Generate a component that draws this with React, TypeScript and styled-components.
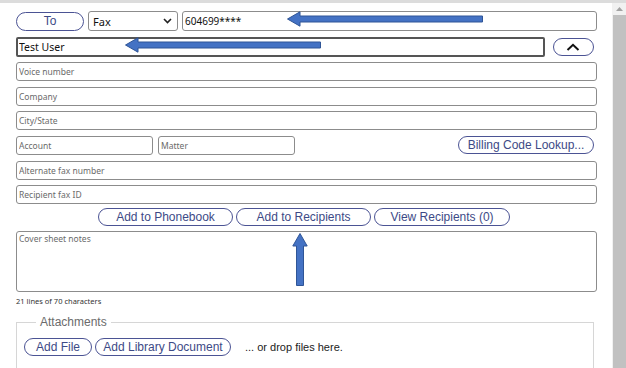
import styled, { createGlobalStyle } from "styled-components";

const GlobalStyle = createGlobalStyle`
  html, body {
    margin: 0;
    padding: 0;
    background: #ffffff;
  }
  * {
    box-sizing: border-box;
  }
`;

const Frame = styled.div`
  width: 626px;
  height: 368px;
  display: flex;
  overflow: hidden;
  position: relative;
  border-top: 3px solid #dcdcdc;
  font-family: "Liberation Sans", Arial, sans-serif;
`;

const Content = styled.div`
  flex: 1;
  padding: 8px 15px 0 16px;
  display: flex;
  flex-direction: column;
`;

const Fields = styled.div`
  display: flex;
  flex-direction: column;
  gap: 5.6px;
`;

const Row = styled.div<{ $justify?: string }>`
  display: flex;
  align-items: center;
  gap: 4px;
  flex: none;
  justify-content: ${(p) => p.$justify || "flex-start"};
`;

const ActionRow = styled(Row)`
  margin-top: 4px;
  gap: 3px;
  padding-right: 5px;
`;

const PillButton = styled.button<{ $w: number; $h?: number }>`
  width: ${(p) => p.$w}px;
  height: ${(p) => p.$h || 18}px;
  flex: none;
  border: 1px solid #4b5394;
  border-radius: 10px;
  background: #ffffff;
  color: #3d4a86;
  font-family: "Liberation Sans", Arial, sans-serif;
  font-size: 12px;
  padding: 0;
  display: flex;
  align-items: center;
  justify-content: center;
  cursor: pointer;
`;

const Field = styled.input<{ $w?: number; $grow?: boolean }>`
  height: 19px;
  width: ${(p) => (p.$w ? `${p.$w}px` : "100%")};
  flex: ${(p) => (p.$grow ? "1 1 auto" : "none")};
  min-width: 0;
  border: 1px solid #8c8c8c;
  border-radius: 3px;
  padding: 0 2px;
  font-family: "Noto Sans", "Open Sans", sans-serif;
  font-size: 8.5px;
  color: #222;
  background: #fff;
  outline: none;
  &::placeholder {
    color: #6a6a6a;
  }
`;

const ValueField = styled(Field)`
  height: 20px;
  font-size: 10px;
  color: #111;
`;

const NameField = styled(Field)`
  height: 20px;
  border: 2px solid #555555;
  border-radius: 2px;
  font-size: 10.5px;
  color: #111;
  padding: 0 1px;
`;

const SelectWrap = styled.div`
  position: relative;
  width: 90px;
  height: 20px;
  flex: none;
`;

const Select = styled.select`
  appearance: none;
  width: 100%;
  height: 100%;
  border: 1px solid #8c8c8c;
  border-radius: 3px;
  background: #fff;
  padding: 0 4px;
  font-family: "Noto Sans", "Open Sans", sans-serif;
  font-size: 11px;
  color: #111;
`;

const SelectChevron = styled.svg`
  position: absolute;
  right: 6px;
  top: 7px;
  pointer-events: none;
`;

const Notes = styled.textarea`
  margin-top: 5px;
  height: 61px;
  width: 100%;
  flex: none;
  resize: none;
  border: 1px solid #8c8c8c;
  border-radius: 3px;
  padding: 1px 2px;
  font-family: "Noto Sans", "Open Sans", sans-serif;
  font-size: 8.5px;
  &::placeholder {
    color: #6a6a6a;
  }
`;

const Hint = styled.div`
  margin-top: 4px;
  font-family: "Noto Sans", "Open Sans", sans-serif;
  font-size: 7.5px;
  color: #333;
`;

const Attachments = styled.fieldset`
  margin: 9px 3px 0 0;
  border: 1px solid #d6d6d6;
  padding: 9px 7px 24px;
  min-width: 0;
  flex: none;
`;

const Legend = styled.legend`
  margin-left: 12px;
  padding: 0 4px;
  font-size: 12px;
  color: #6b6b6b;
`;

const AttachRow = styled(Row)`
  gap: 3px;
`;

const DropHint = styled.span`
  margin-left: 11px;
  font-size: 11px;
  color: #222;
`;

const Scrollbar = styled.div`
  width: 14px;
  flex: none;
  display: flex;
  flex-direction: column;
  background: #f1f1f1;
`;

const ScrollArrow = styled.div`
  height: 12px;
  display: flex;
  align-items: center;
  justify-content: center;
`;

const ScrollThumb = styled.div`
  flex: 1;
  margin-left: 1px;
  background: #c1c1c1;
`;

const Annotation = styled.svg`
  position: absolute;
  pointer-events: none;
`;

function LeftArrow(props: { x: number; y: number; w: number }) {
  const { x, y, w } = props;
  return (
    <Annotation width={w} height={16} style={{ left: x, top: y }}>
      <path
        d={`M0.5 8 L13 0.8 L13 5 L${w - 0.5} 5 L${w - 0.5} 11 L13 11 L13 15.2 Z`}
        fill="#4472c4"
        stroke="#2f5597"
        strokeWidth="1"
      />
    </Annotation>
  );
}

function UpArrow(props: { x: number; y: number; h: number }) {
  const { x, y, h } = props;
  return (
    <Annotation width={16} height={h} style={{ left: x, top: y }}>
      <path
        d={`M8 0.5 L15.2 13 L11.5 13 L11.5 ${h - 0.5} L4.5 ${h - 0.5} L4.5 13 L0.8 13 Z`}
        fill="#4472c4"
        stroke="#2f5597"
        strokeWidth="1"
      />
    </Annotation>
  );
}

function App() {
  return (
    <>
      <GlobalStyle />
      <Frame>
        <Content>
          <Fields>
            <Row>
              <PillButton $w={68} $h={19}>To</PillButton>
              <SelectWrap>
                <Select defaultValue="Fax">
                  <option>Fax</option>
                </Select>
                <SelectChevron width="9" height="6" viewBox="0 0 9 6">
                  <path d="M1 1 L4.5 4.5 L8 1" fill="none" stroke="#222" strokeWidth="1.6" />
                </SelectChevron>
              </SelectWrap>
              <ValueField $grow defaultValue="604699****" />
            </Row>
            <Row>
              <NameField $w={529} defaultValue="Test User" />
              <Row $justify="center" style={{ flex: 1 }}>
                <PillButton $w={41}>
                  <svg width="14" height="8" viewBox="0 0 14 8">
                    <path d="M1.5 7 L7 1.8 L12.5 7" fill="none" stroke="#111" strokeWidth="2" />
                  </svg>
                </PillButton>
              </Row>
            </Row>
            <Field placeholder="Voice number" />
            <Field placeholder="Company" />
            <Field placeholder="City/State" />
            <Row $justify="space-between">
              <Row>
                <Field $w={137} placeholder="Account" />
                <Field $w={137} placeholder="Matter" style={{ marginLeft: 1 }} />
              </Row>
              <PillButton $w={136} style={{ marginRight: 3 }}>
                Billing Code Lookup...
              </PillButton>
            </Row>
            <Field placeholder="Alternate fax number" />
            <Field placeholder="Recipient fax ID" />
          </Fields>
          <ActionRow $justify="center">
            <PillButton $w={135}>Add to Phonebook</PillButton>
            <PillButton $w={135}>Add to Recipients</PillButton>
            <PillButton $w={136}>View Recipients (0)</PillButton>
          </ActionRow>
          <Notes placeholder="Cover sheet notes" />
          <Hint>21 lines of 70 characters</Hint>
          <Attachments>
            <Legend>Attachments</Legend>
            <AttachRow>
              <PillButton $w={68}>Add File</PillButton>
              <PillButton $w={136}>Add Library Document</PillButton>
              <DropHint>... or drop files here.</DropHint>
            </AttachRow>
          </Attachments>
        </Content>
        <Scrollbar>
          <ScrollArrow>
            <svg width="7" height="4" viewBox="0 0 7 4">
              <path d="M0 4 L3.5 0 L7 4 Z" fill="#a3a3a3" />
            </svg>
          </ScrollArrow>
          <ScrollThumb />
        </Scrollbar>
        <LeftArrow x={287} y={8} w={196} />
        <LeftArrow x={125} y={34} w={196} />
        <UpArrow x={292} y={230} h={53} />
      </Frame>
    </>
  );
}

export default App;
